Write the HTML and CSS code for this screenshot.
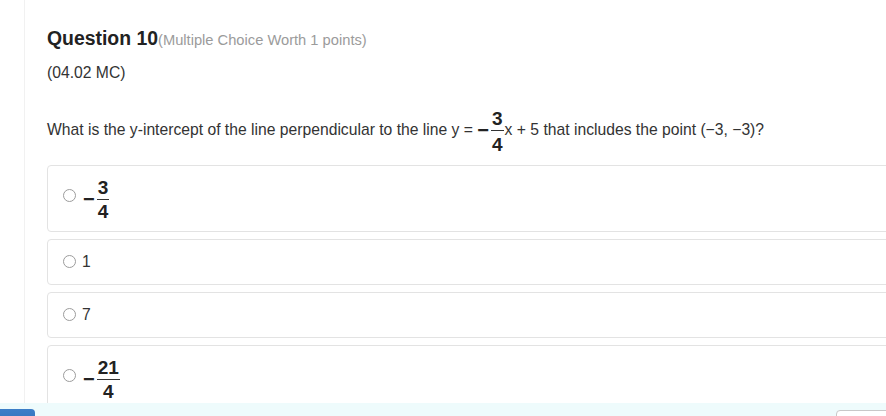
FILE: index.html
```html
<!DOCTYPE html>
<html lang="en">
<head>
<meta charset="utf-8">
<title>Question 10</title>
<link rel="stylesheet" href="styles.css">
</head>
<body>
<div class="page">
  <main class="main">
    <div class="content">
      <h2 class="title">Question 10<span class="worth">(Multiple Choice Worth 1 points)</span></h2>
      <p class="code">(04.02 MC)</p>
      <p class="question">What is the y-intercept of the line perpendicular to the line y = <span class="neg q"><span class="minus">&minus;</span><span class="frac q"><span class="num">3</span><span class="den">4</span></span></span>x + 5 that includes the point (&minus;3, &minus;3)?</p>
      <div class="options">
        <label class="option has-frac"><input class="radio" type="radio" name="q10"><span class="neg"><span class="minus">&minus;</span><span class="frac"><span class="num">3</span><span class="den">4</span></span></span></label>
        <label class="option"><input class="radio" type="radio" name="q10"><span class="opt-text">1</span></label>
        <label class="option"><input class="radio" type="radio" name="q10"><span class="opt-text">7</span></label>
        <label class="option has-frac"><input class="radio" type="radio" name="q10"><span class="neg"><span class="minus">&minus;</span><span class="frac"><span class="num">21</span><span class="den">4</span></span></span></label>
      </div>
    </div>
  </main>
  <footer class="footer">
    <button class="btn-primary" type="button" aria-label="Previous"></button>
    <button class="btn-secondary" type="button" aria-label="Next"></button>
  </footer>
</div>
</body>
</html>
```
FILE: styles.css
```css
html, body {
  margin: 0;
  padding: 0;
  background: #ffffff;
}
body {
  font-family: "Liberation Sans", Arial, sans-serif;
  color: #333333;
  overflow: hidden;
}
.page {
  width: 886px;
  height: 416px;
  display: flex;
  flex-direction: column;
  overflow: hidden;
}
.main {
  height: 403px;
  flex: none;
  margin-left: 24px;
  border-left: 1px solid #f1f1f1;
  overflow: hidden;
}
.content {
  padding: 26px 0 0 22px;
}
.title {
  margin: 0;
  font-size: 19.4px;
  line-height: 24px;
  font-weight: bold;
  color: #222222;
}
.worth {
  font-size: 14.7px;
  font-weight: normal;
  color: #9b9b9b;
}
.code {
  margin: 11px 0 0;
  font-size: 15.7px;
  line-height: 20px;
  color: #333333;
}
.question {
  margin: 25px 0 0;
  font-size: 15.7px;
  line-height: 20px;
  color: #333333;
}
.neg {
  display: inline-flex;
  align-items: center;
  font-weight: bold;
  color: #222222;
}
.neg.q {
  vertical-align: middle;
  margin-right: 1px;
}
.minus {
  font-size: 20px;
  line-height: 19px;
  margin-right: 2px;
}
.frac {
  display: inline-flex;
  flex-direction: column;
  font-size: 19px;
  line-height: 17px;
  text-align: center;
}
.num {
  padding: 0 1px 3px;
  border-bottom: 1px solid #333333;
}
.den {
  padding: 3px 1px 0;
}
.frac.q .num {
  padding-top: 2px;
  padding-bottom: 3px;
}
.frac.q .den {
  padding-top: 5px;
}
.options {
  margin: 12px -20px 0 0;
  display: flex;
  flex-direction: column;
  gap: 7px;
}
.option {
  display: flex;
  align-items: center;
  padding: 12px 15px;
  border: 1px solid #e3e3e3;
  border-radius: 4px;
  font-size: 15.7px;
  line-height: 20px;
  color: #333333;
}
.option.has-frac {
  padding: 7px 15px 11px;
}
.option.has-frac .neg {
  margin-top: 6px;
  margin-left: 1px;
}
.radio {
  appearance: none;
  -webkit-appearance: none;
  box-sizing: border-box;
  width: 13px;
  height: 13px;
  margin: 0 6px 2px 0;
  border: 1px solid #9c9c9c;
  border-radius: 50%;
  background: #ffffff;
  flex: none;
}
.footer {
  height: 13px;
  flex: none;
  display: flex;
  justify-content: space-between;
  align-items: flex-start;
  padding-top: 6px;
  box-sizing: border-box;
  background: #eefbfc;
  overflow: hidden;
}
.btn-primary {
  width: 35px;
  height: 30px;
  border: 0;
  border-radius: 0 4px 0 0;
  background: linear-gradient(#3c7ec8, #2a68ae);
  padding: 0;
}
.btn-secondary {
  width: 56px;
  height: 30px;
  margin: 1px -6px 0 0;
  border: 1px solid #c8c8c8;
  border-radius: 4px;
  background: #ffffff;
  padding: 0;
}
```
